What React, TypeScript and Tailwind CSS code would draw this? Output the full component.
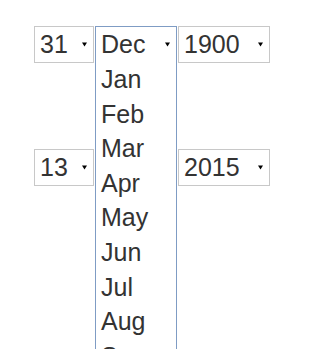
import React from 'react';

const months = ['Jan', 'Feb', 'Mar', 'Apr', 'May', 'Jun', 'Jul', 'Aug', 'Sep', 'Oct', 'Nov', 'Dec'];

function Caret() {
    return (
        <svg width="5" height="6" viewBox="0 0 5 6" className="mb-[2px] shrink-0">
            <path d="M0 1.5 H5 L2.5 5.5 Z" fill="#000" />
        </svg>
    );
}

function Box({ value, width, focused = false }: { value: string; width: string; focused?: boolean }) {
    return (
        <div
            className={`flex h-[37px] items-center justify-between border pl-[5px] pr-[6px] ${width} ${
                focused ? 'border-[#7f9cc4]' : 'border-[#c8c8c8]'
            }`}
        >
            <span className="leading-none">{value}</span>
            <Caret />
        </div>
    );
}

export default function App() {
    return (
        <div
            className="h-[349px] w-[312px] overflow-hidden bg-white pl-[34px] pt-[26px] text-[25px] text-[#333]"
            style={{ fontFamily: '"Liberation Sans", Arial, sans-serif' }}
        >
            <div className="flex gap-[1px]">
                <Box value="31" width="w-[60px]" />
                <div className="relative">
                    <Box value="Dec" width="w-[82px]" focused />
                    {/* open month list, covers the second row's month select */}
                    <div className="absolute left-0 top-[36px] z-10 w-[82px] border border-t-0 border-[#7f9cc4] bg-white pl-[5px]">
                        {months.map((m) => (
                            <div key={m} className="h-[34.6px] leading-[34.6px]">
                                {m}
                            </div>
                        ))}
                    </div>
                </div>
                <Box value="1900" width="w-[92px]" />
            </div>

            <div className="mt-[86px] flex gap-[1px]">
                <Box value="13" width="w-[60px]" />
                <div className="w-[82px]" />
                <Box value="2015" width="w-[92px]" />
            </div>
        </div>
    );
}
